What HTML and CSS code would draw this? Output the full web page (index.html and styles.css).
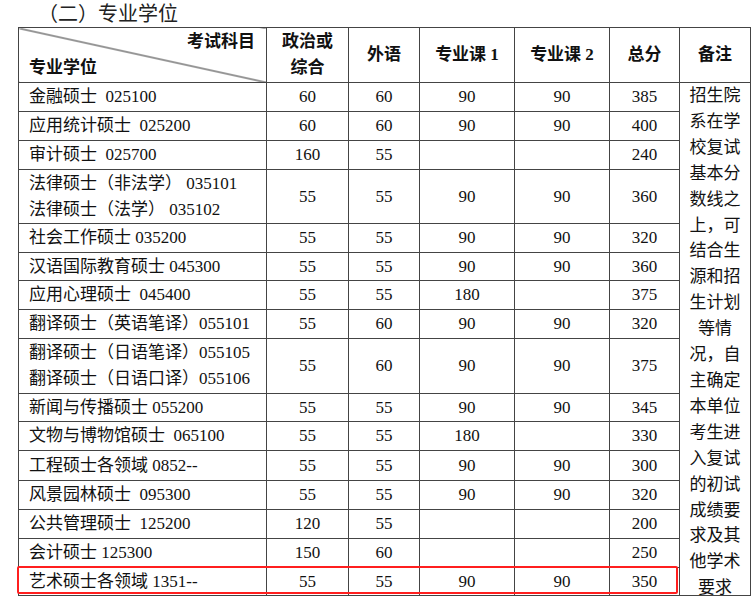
FILE: index.html
```html
<!DOCTYPE html>
<html lang="zh">
<head>
<meta charset="utf-8">
<title>专业学位</title>
<link rel="stylesheet" href="styles.css">
</head>
<body>
<div class="title">（二）专业学位</div>
<div class="wrap">
<table class="grid">
<colgroup>
<col class="c-name"><col class="c-pol"><col class="c-lang"><col class="c-p1"><col class="c-p2"><col class="c-tot"><col class="c-rem">
</colgroup>
<thead>
<tr class="head">
<th class="diag"><div class="diag-in"><span class="d-top">考试科目</span><span class="d-bot">专业学位</span></div></th>
<th>政治或<br>综合</th>
<th>外语</th>
<th>专业课 1</th>
<th>专业课 2</th>
<th>总分</th>
<th>备注</th>
</tr>
</thead>
<tbody>
<tr class="r1"><td class="name">金融硕士  025100</td><td>60</td><td>60</td><td>90</td><td>90</td><td>385</td>
<td class="rem" rowspan="16"><div class="rem-in">招生院<br>系在学<br>校复试<br>基本分<br>数线之<br>上，可<br>结合生<br>源和招<br>生计划<br>等情<br>况，自<br>主确定<br>本单位<br>考生进<br>入复试<br>的初试<br>成绩要<br>求及其<br>他学术<br>要求</div></td></tr>
<tr class="r1"><td class="name">应用统计硕士  025200</td><td>60</td><td>60</td><td>90</td><td>90</td><td>400</td></tr>
<tr class="r1"><td class="name">审计硕士  025700</td><td>160</td><td>55</td><td></td><td></td><td>240</td></tr>
<tr class="r2"><td class="name">法律硕士（非法学） 035101<br>法律硕士（法学） 035102</td><td>55</td><td>55</td><td>90</td><td>90</td><td>360</td></tr>
<tr class="r1"><td class="name">社会工作硕士 035200</td><td>55</td><td>55</td><td>90</td><td>90</td><td>320</td></tr>
<tr class="r1b"><td class="name">汉语国际教育硕士 045300</td><td>55</td><td>55</td><td>90</td><td>90</td><td>360</td></tr>
<tr class="r1"><td class="name">应用心理硕士  045400</td><td>55</td><td>55</td><td>180</td><td></td><td>375</td></tr>
<tr class="r1"><td class="name">翻译硕士（英语笔译）055101</td><td>55</td><td>60</td><td>90</td><td>90</td><td>320</td></tr>
<tr class="r2b"><td class="name">翻译硕士（日语笔译）055105<br>翻译硕士（日语口译）055106</td><td>55</td><td>60</td><td>90</td><td>90</td><td>375</td></tr>
<tr class="r1b"><td class="name">新闻与传播硕士 055200</td><td>55</td><td>55</td><td>90</td><td>90</td><td>345</td></tr>
<tr class="r1"><td class="name">文物与博物馆硕士  065100</td><td>55</td><td>55</td><td>180</td><td></td><td>330</td></tr>
<tr class="r1c"><td class="name">工程硕士各领域 0852--</td><td>55</td><td>55</td><td>90</td><td>90</td><td>300</td></tr>
<tr class="r1"><td class="name">风景园林硕士  095300</td><td>55</td><td>55</td><td>90</td><td>90</td><td>320</td></tr>
<tr class="r1"><td class="name">公共管理硕士  125200</td><td>120</td><td>55</td><td></td><td></td><td>200</td></tr>
<tr class="r1"><td class="name">会计硕士 125300</td><td>150</td><td>60</td><td></td><td></td><td>250</td></tr>
<tr class="r1b"><td class="name">艺术硕士各领域 1351--</td><td>55</td><td>55</td><td>90</td><td>90</td><td>350</td></tr>
</tbody>
</table>
<div class="highlight"></div>
</div>
</body>
</html>
```
FILE: styles.css
```css
html, body {
  margin: 0;
  padding: 0;
  background: #ffffff;
}
body {
  font-family: "Liberation Serif", "Noto Sans CJK SC", serif;
  color: #111111;
  font-size: 17px;
}
.title {
  height: 27px;
  line-height: 28px;
  font-size: 20px;
  padding-left: 38px;
  color: #222222;
  font-family: "Liberation Serif", "Noto Sans CJK SC", serif;
}
.wrap {
  position: relative;
  margin-left: 18px;
  width: 733px;
}
.grid {
  border-collapse: collapse;
  table-layout: fixed;
  width: 733px;
}
.c-name { width: 248px; }
.c-pol { width: 82px; }
.c-lang { width: 71px; }
.c-p1 { width: 95px; }
.c-p2 { width: 95px; }
.c-tot { width: 70px; }
.c-rem { width: 71px; }
.grid th, .grid td {
  border: 1px solid #444444;
  padding: 0;
  text-align: center;
  vertical-align: middle;
  line-height: 26px;
  white-space: pre;
}
.grid th {
  font-weight: bold;
  font-size: 17px;
}
.head { height: 54px; }
.r1 { height: 29px; }
.r1b { height: 28px; }
.r1c { height: 30px; }
.r2 { height: 54px; }
.r2b { height: 55px; }
.grid td.name {
  text-align: left;
  padding-left: 10px;
  line-height: 26px;
}
.grid th.diag {
  padding: 0;
  background: linear-gradient(to top right, transparent calc(50% - 1px), #333333 50%, transparent calc(50% + 1px));
}
.diag-in {
  display: flex;
  flex-direction: column;
  height: 54px;
  justify-content: center;
}
.d-top {
  text-align: right;
  padding-right: 11px;
  line-height: 26px;
}
.d-bot {
  text-align: left;
  padding-left: 10px;
  line-height: 26px;
}
.grid td.rem {
  vertical-align: top;
  padding: 0;
}
.rem-in {
  height: 500px;
  line-height: 25.9px;
  text-align: center;
  white-space: normal;
}
.highlight {
  position: absolute;
  left: -1px;
  top: 539px;
  width: 661px;
  height: 28px;
  box-sizing: border-box;
  border: 2px solid #ff1f1f;
  border-radius: 2px;
}
```
